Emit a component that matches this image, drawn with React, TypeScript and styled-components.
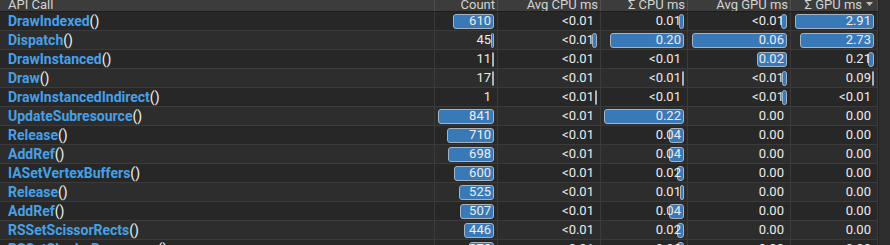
import { FC } from "react";
import styled, { createGlobalStyle } from "styled-components";

const GlobalStyle = createGlobalStyle`
  html, body {
    margin: 0;
    padding: 0;
    background: #272727;
    overflow: hidden;
  }
  body {
    font-family: Roboto, "Liberation Sans", sans-serif;
    font-size: 13px;
  }
`;

const COLS = "435px 63px 103px 87px 103px 87px";

const Frame = styled.div`
  display: flex;
  width: 890px;
  height: 245px;
  overflow: hidden;
  background: #272727;
`;

const Table = styled.div`
  width: 878px;
  display: flex;
  flex-direction: column;
  flex-shrink: 0;
`;

const Gutter = styled.div`
  flex: 1;
  background: #2e2e2e;
  border-left: 1px solid #222;
`;

const HeaderRow = styled.div`
  display: grid;
  grid-template-columns: ${COLS};
  height: 11px;
  background: #3c3c3c;
  border-bottom: 1px solid #1d1d1d;
`;

const HeaderCell = styled.div<{ $left?: boolean }>`
  display: flex;
  align-items: flex-end;
  justify-content: ${(p) => (p.$left ? "flex-start" : "flex-end")};
  gap: 4px;
  overflow: hidden;
  padding: 0 ${(p) => (p.$left ? "0 0 8px" : "2px 0 0")};
  border-right: 1px solid #505050;
  color: #d4d4d4;
  line-height: 15px;
  white-space: nowrap;
  span {
    margin-bottom: -1px;
  }
`;

const SortIcon = styled.svg`
  align-self: flex-start;
  margin: 2px 2px 0 0;
`;

const Row = styled.div<{ $alt: boolean }>`
  display: grid;
  grid-template-columns: ${COLS};
  height: 18px;
  border-bottom: 1px solid #3b3b3b;
  background: ${(p) => (p.$alt ? "#2d2d2d" : "#272727")};
`;

const NameCell = styled.div`
  display: flex;
  align-items: center;
  padding-left: 8px;
  border-right: 1px solid #3b3b3b;
  white-space: nowrap;
  overflow: hidden;
  font-size: 14px;
`;

const FuncName = styled.span`
  color: #46a0e8;
  font-weight: 700;
`;

const Parens = styled.span`
  color: #f0f0f0;
`;

const NumCell = styled.div`
  display: grid;
  align-items: center;
  justify-items: end;
  border-right: 1px solid #3b3b3b;
  overflow: hidden;
  > * {
    grid-area: 1 / 1;
  }
`;

const Bar = styled.div`
  height: 15px;
  box-sizing: border-box;
  margin-right: 3px;
  background: #3a79b8;
  border: 1px solid #a9b3bd;
  border-radius: 3px;
`;

const Value = styled.span`
  position: relative;
  padding-right: 6px;
  color: #ececec;
  line-height: 18px;
`;

type Col = { title: string; full: number; max: number; count?: boolean };

const columns: Col[] = [
  { title: "Count", full: 56, max: 841, count: true },
  { title: "Avg CPU ms", full: 95, max: 0.09 },
  { title: "Σ CPU ms", full: 80, max: 0.22 },
  { title: "Avg GPU ms", full: 95, max: 0.06 },
  { title: "Σ GPU ms", full: 79, max: 2.91 },
];

const rows: { name: string; v: number[] }[] = [
  { name: "DrawIndexed", v: [610, 0.0002, 0.014, 0.004, 2.91] },
  { name: "Dispatch", v: [45, 0.0047, 0.203, 0.06, 2.73] },
  { name: "DrawInstanced", v: [11, 0.0003, 0.001, 0.019, 0.21] },
  { name: "Draw", v: [17, 0.0002, 0.006, 0.003, 0.09] },
  { name: "DrawInstancedIndirect", v: [1, 0.002, 0.001, 0.003, 0.004] },
  { name: "UpdateSubresource", v: [841, 0.0003, 0.22, 0, 0] },
  { name: "Release", v: [710, 0.0001, 0.04, 0, 0] },
  { name: "AddRef", v: [698, 0.0001, 0.04, 0, 0] },
  { name: "IASetVertexBuffers", v: [600, 0.0002, 0.02, 0, 0] },
  { name: "Release", v: [525, 0.0001, 0.01, 0, 0] },
  { name: "AddRef", v: [507, 0.0001, 0.04, 0, 0] },
  { name: "RSSetScissorRects", v: [446, 0.0001, 0.02, 0, 0] },
  { name: "PSSetShaderResources", v: [372, 0.0001, 0.02, 0, 0] },
];

const fmt = (v: number, c: Col) => {
  if (c.count) return String(v);
  if (v > 0 && v < 0.01) return "<0.01";
  return v.toFixed(2);
};

const Cell: FC<{ value: number; col: Col }> = ({ value, col }) => {
  const w = (value / col.max) * col.full;
  return (
    <NumCell>
      {w >= 0.5 && <Bar style={{ width: Math.max(2, Math.round(w)) }} />}
      <Value>{fmt(value, col)}</Value>
    </NumCell>
  );
};

export default function App() {
  return (
    <>
      <GlobalStyle />
      <Frame>
        <Table>
          <HeaderRow>
            <HeaderCell $left>
              <span>API Call</span>
            </HeaderCell>
            {columns.map((c, i) => (
              <HeaderCell key={c.title}>
                <span>{c.title}</span>
                {i === columns.length - 1 && (
                  <SortIcon width="7" height="4" viewBox="0 0 7 4">
                    <path d="M0 0h7L3.5 4z" fill="#bdbdbd" />
                  </SortIcon>
                )}
              </HeaderCell>
            ))}
          </HeaderRow>
          {rows.map((r, i) => (
            <Row key={i} $alt={i % 2 === 1}>
              <NameCell>
                <FuncName>{r.name}</FuncName>
                <Parens>()</Parens>
              </NameCell>
              {columns.map((c, j) => (
                <Cell key={j} value={r.v[j]} col={c} />
              ))}
            </Row>
          ))}
        </Table>
        <Gutter />
      </Frame>
    </>
  );
}
